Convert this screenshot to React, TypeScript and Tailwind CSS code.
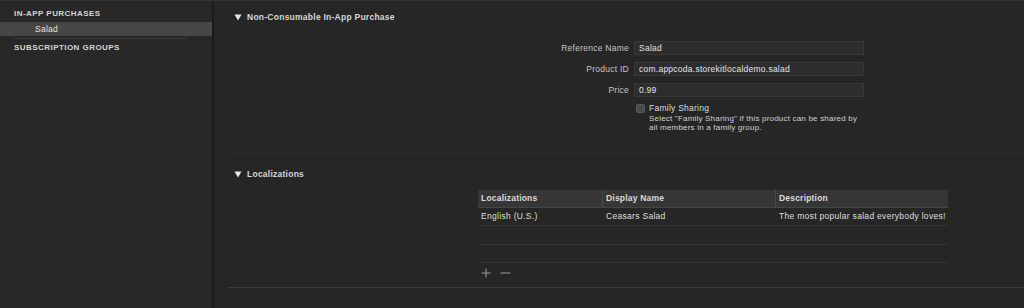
import React from "react";

// Xcode StoreKit configuration editor — dark appearance

const font = { fontFamily: '"Liberation Sans", Arial, sans-serif' };

function Disclosure() {
  return (
    <svg width="8" height="7" viewBox="0 0 8 7" className="shrink-0">
      <path d="M0.5 0.5 H7.5 L4 6.5 Z" fill="#e6e6e6" />
    </svg>
  );
}

function SectionHeader({ title, className }: { title: string; className: string }) {
  return (
    <div className={`flex items-center gap-[5px] pl-[20px] ${className}`}>
      <Disclosure />
      <span className="text-[8.5px] font-bold tracking-[0.25px] text-[#d6d6d6]">{title}</span>
    </div>
  );
}

function Field({ label, value }: { label: string; value: string }) {
  return (
    <>
      <div className="flex h-[14px] items-center justify-end text-[8.5px] tracking-[0.25px] text-[#c4c4c4]">
        {label}
      </div>
      <div className="flex h-[14px] items-center border border-[#383838] bg-[#2d2d2d] px-[4px] text-[8.5px] tracking-[0.25px] text-[#e2e2e2]">
        {value}
      </div>
    </>
  );
}

const columns = [
  { title: "Localizations", width: "w-[125px]" },
  { title: "Display Name", width: "w-[173px]" },
  { title: "Description", width: "min-w-0 flex-1" },
];

const rows = [
  ["English (U.S.)", "Ceasars Salad", "The most popular salad everybody loves!"],
  ["", "", ""],
  ["", "", ""],
];

export default function App() {
  return (
    <div
      className="flex h-[308px] w-[1024px] overflow-hidden border-t border-[#333333] bg-[#262626]"
      style={font}
    >
      {/* Sidebar */}
      <aside className="w-[214px] shrink-0 border-r-2 border-[#1b1b1b] bg-[#282828] pt-[7px]">
        <div className="flex h-[12px] items-center px-[14px] text-[8px] font-bold tracking-[0.45px] text-[#d4d4d4]">
          IN-APP PURCHASES
        </div>
        <div className="mt-[2px] flex h-[14px] items-center bg-[#464646] pl-[35px] text-[8.5px] tracking-[0.25px] text-[#e0e0e0]">
          Salad
        </div>
        <div className="mx-[14px] mt-[2px] w-[174px] border-t border-[#3a3a3a]" />
        <div className="mt-[3px] flex h-[12px] items-center px-[14px] text-[8px] font-bold tracking-[0.45px] text-[#d4d4d4]">
          SUBSCRIPTION GROUPS
        </div>
      </aside>

      {/* Editor */}
      <main className="flex min-w-0 flex-1 flex-col">
        <section className="h-[157px] shrink-0">
          <SectionHeader title="Non-Consumable In-App Purchase" className="h-[32px]" />
          <div className="ml-[335px] mt-[8px] grid w-[315px] grid-cols-[80px_230px] gap-x-[5px] gap-y-[7px]">
            <Field label="Reference Name" value="Salad" />
            <Field label="Product ID" value="com.appcoda.storekitlocaldemo.salad" />
            <Field label="Price" value="0.99" />
            <div />
            <div className="-mt-[1px] flex gap-[4px] pl-[2px]">
              <div className="mt-[1px] h-[9px] w-[9px] shrink-0 rounded-[2px] border border-[#5a5a5a] bg-[#4a4a4a]" />
              <div>
                <div className="flex h-[10px] items-center text-[8.5px] tracking-[0.25px] text-[#dcdcdc]">
                  Family Sharing
                </div>
                <div className="mt-[1px] whitespace-nowrap text-[8px] leading-[9px] tracking-[0.2px] text-[#cfcfcf]">
                  Select "Family Sharing" if this product can be shared by
                  <br />
                  all members in a family group.
                </div>
              </div>
            </div>
          </div>
        </section>

        <div className="ml-[14px] border-t border-[#1f1f1f]" />

        <section>
          <SectionHeader title="Localizations" className="h-[31px]" />
          <div className="ml-[264px] w-[470px]">
            <div className="flex h-[18px] border-b border-[#454545] bg-[#363636] text-[8.5px] font-bold tracking-[0.2px] text-[#dadada]">
              {columns.map((c, i) => (
                <div
                  key={c.title}
                  className={`flex items-center whitespace-nowrap px-[3px] ${c.width} ${
                    i < columns.length - 1 ? "border-r border-[#4a4a4a]" : ""
                  }`}
                >
                  {c.title}
                </div>
              ))}
            </div>
            {rows.map((r, ri) => (
              <div
                key={ri}
                className={`flex border-b border-[#333333] text-[8.5px] tracking-[0.3px] text-[#dedede] ${
                  ri === 1 ? "h-[19px]" : "h-[18px]"
                }`}
              >
                {r.map((cell, ci) => (
                  <div
                    key={ci}
                    className={`flex items-center whitespace-nowrap px-[3px] ${columns[ci].width}`}
                  >
                    {cell}
                  </div>
                ))}
              </div>
            ))}
            <div className="flex h-[20px] items-center gap-[9px] pl-[3px]">
              <svg width="10" height="10" viewBox="0 0 10 10">
                <path d="M5 0.5 V9.5 M0.5 5 H9.5" stroke="#9c9c9c" strokeWidth="1" />
              </svg>
              <svg width="11" height="10" viewBox="0 0 11 10">
                <path d="M0.5 5 H10.5" stroke="#9c9c9c" strokeWidth="1" />
              </svg>
            </div>
          </div>
        </section>

        <div className="ml-[14px] mt-[4px] border-t border-[#3a3a3a]" />
      </main>
    </div>
  );
}
